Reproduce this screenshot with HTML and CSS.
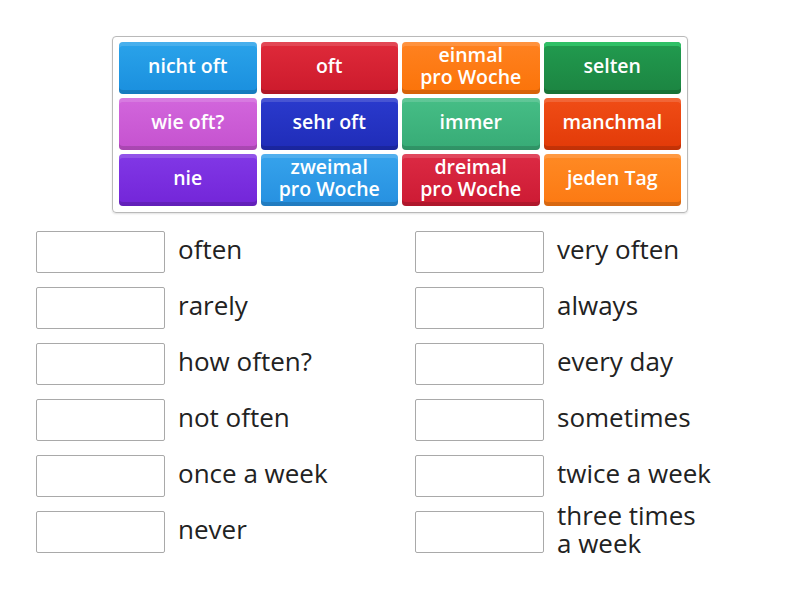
FILE: index.html
```html
<!DOCTYPE html>
<html>
<head>
<meta charset="utf-8">
<link rel="stylesheet" href="styles.css">
</head>
<body>
<div class="board">
  <div class="tile c-blue">nicht oft</div>
  <div class="tile c-red">oft</div>
  <div class="tile c-orange">einmal<br>pro Woche</div>
  <div class="tile c-green">selten</div>
  <div class="tile c-pink">wie oft?</div>
  <div class="tile c-navy">sehr oft</div>
  <div class="tile c-mint">immer</div>
  <div class="tile c-redorange">manchmal</div>
  <div class="tile c-violet">nie</div>
  <div class="tile c-lightblue">zweimal<br>pro Woche</div>
  <div class="tile c-crimson">dreimal<br>pro Woche</div>
  <div class="tile c-orange2">jeden Tag</div>
</div>
<div class="answers">
  <div class="col">
    <div class="row"><div class="box"></div><div class="label">often</div></div>
    <div class="row"><div class="box"></div><div class="label">rarely</div></div>
    <div class="row"><div class="box"></div><div class="label">how often?</div></div>
    <div class="row"><div class="box"></div><div class="label">not often</div></div>
    <div class="row"><div class="box"></div><div class="label">once a week</div></div>
    <div class="row"><div class="box"></div><div class="label">never</div></div>
  </div>
  <div class="col">
    <div class="row"><div class="box"></div><div class="label">very often</div></div>
    <div class="row"><div class="box"></div><div class="label">always</div></div>
    <div class="row"><div class="box"></div><div class="label">every day</div></div>
    <div class="row"><div class="box"></div><div class="label">sometimes</div></div>
    <div class="row"><div class="box"></div><div class="label">twice a week</div></div>
    <div class="row"><div class="box"></div><div class="label">three times<br>a week</div></div>
  </div>
</div>
</body>
</html>
```

FILE: styles.css
```css
html, body {
  margin: 0;
  padding: 0;
  background: #ffffff;
  font-family: "Open Sans", "DejaVu Sans", sans-serif;
}
.board {
  box-sizing: border-box;
  margin: 36px 0 0 112px;
  width: 576px;
  height: 177px;
  border: 1px solid #b9b9b9;
  border-radius: 4px;
  padding: 5px 6px 6px 6px;
  display: grid;
  grid-template-columns: repeat(4, 1fr);
  grid-auto-rows: 52px;
  gap: 4px;
  box-shadow: 0 1px 2px rgba(0,0,0,0.12);
}
.tile {
  box-sizing: border-box;
  border-radius: 4px;
  color: #ffffff;
  font-weight: 600;
  font-size: 19.5px;
  line-height: 22px;
  text-align: center;
  display: flex;
  align-items: center;
  justify-content: center;
  padding-bottom: 4px;
  box-shadow: inset 0 -4px 0 rgba(0,0,0,0.14), inset 0 4px 0 rgba(255,255,255,0.14);
}
.c-blue { background: linear-gradient(#2aa3ea, #1a8fde); }
.c-red { background: linear-gradient(#df2a3a, #cc1a2c); }
.c-orange { background: linear-gradient(#ff8220, #fb7309); }
.c-green { background: linear-gradient(#219b4f, #1c8441); box-shadow: inset 0 -4px 0 rgba(0,0,0,0.14), inset 0 4px 0 #2fc066; }
.c-pink { background: linear-gradient(#d266dc, #c552cf); }
.c-navy { background: linear-gradient(#2a3acd, #1f2cb8); }
.c-mint { background: linear-gradient(#46be86, #37ab76); }
.c-redorange { background: linear-gradient(#f04d16, #e23a08); }
.c-violet { background: linear-gradient(#8138e6, #7325d8); }
.c-lightblue { background: linear-gradient(#36a3ec, #2690e0); }
.c-crimson { background: linear-gradient(#dc2a44, #cc1a33); }
.c-orange2 { background: linear-gradient(#ff8a24, #fc7912); }

.answers {
  display: flex;
  margin: 18px 0 0 36px;
}
.col {
  width: 379px;
  display: flex;
  flex-direction: column;
  gap: 14px;
}
.row {
  display: flex;
  align-items: center;
  height: 42px;
}
.box {
  box-sizing: border-box;
  width: 129px;
  height: 42px;
  border: 1px solid #a9a9a9;
  border-radius: 2px;
  background: #fff;
  flex: none;
}
.label {
  margin-left: 13px;
  font-size: 26px;
  line-height: 28px;
  color: #222222;
  margin-bottom: 7px;
}
```
